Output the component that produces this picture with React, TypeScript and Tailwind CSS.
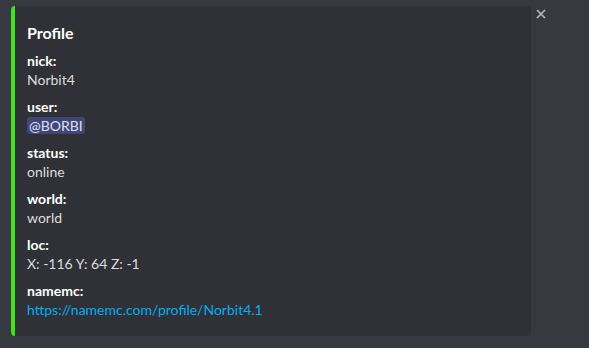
import React from "react";

type Field = { name: string; value: React.ReactNode };

const fields: Field[] = [
  { name: "nick:", value: "Norbit4" },
  {
    name: "user:",
    value: (
      <span className="rounded-[3px] bg-[#414675] px-[2px] text-[#dee0fc]">@BORBI</span>
    ),
  },
  { name: "status:", value: "online" },
  { name: "world:", value: "world" },
  { name: "loc:", value: "X: -116 Y: 64 Z: -1" },
  {
    name: "namemc:",
    value: <span className="text-[#00aff4]">https://namemc.com/profile/Norbit4.1</span>,
  },
];

const App = () => {
  return (
    <div
      className="flex h-[348px] w-[589px] items-start bg-[#36393f] pl-[11px] pt-[6px]"
      style={{ fontFamily: 'Lato, "Noto Sans", sans-serif' }}
    >
      <div className="flex w-[520px] rounded-[4px] bg-[#2f3136]">
        <div className="w-[4px] shrink-0 rounded-l-[4px] bg-[#3ee31a]" />
        <div className="flex flex-col pb-[16px] pl-[12px] pt-[16px]">
          <div className="text-[16px] font-bold leading-[22px] text-white">Profile</div>
          {fields.map((f) => (
            <div key={f.name} className="mt-[8px] flex flex-col">
              <div className="text-[14px] font-bold leading-[18px] text-white">{f.name}</div>
              <div className="text-[14px] leading-[20px] text-[#dcddde]">{f.value}</div>
            </div>
          ))}
        </div>
      </div>
      <button type="button" className="ml-[5px] mt-[3px] text-[#b9bbbe]">
        <svg width="10" height="10" viewBox="0 0 10 10" fill="none" stroke="currentColor" strokeWidth="1.6">
          <path d="M1 1L9 9M9 1L1 9" />
        </svg>
      </button>
    </div>
  );
};

export default App;
